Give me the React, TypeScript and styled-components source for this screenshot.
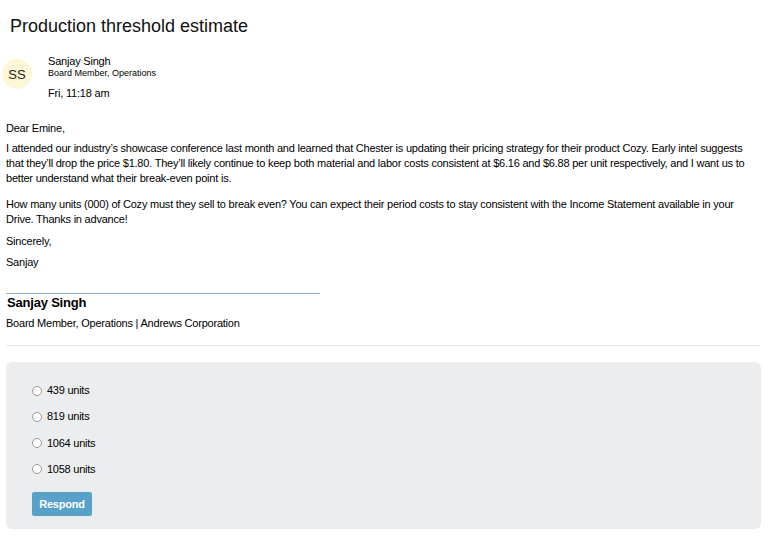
import styled, { createGlobalStyle } from "styled-components";

const GlobalStyle = createGlobalStyle`
  body {
    margin: 0;
    background: #ffffff;
    font-family: "Liberation Sans", Arial, sans-serif;
    color: #000000;
  }
`;

const Page = styled.div`
  padding: 0 10px 0 6px;
`;

const Title = styled.h1`
  margin: 0;
  padding: 14px 0 0 4px;
  font-size: 18px;
  font-weight: 400;
  line-height: 24px;
  color: #111;
`;

const Sender = styled.div`
  display: flex;
  align-items: flex-start;
  gap: 16px;
  margin-top: 17px;
  margin-left: -4px;
`;

const Avatar = styled.div`
  width: 30px;
  height: 30px;
  margin-top: 4px;
  border-radius: 50%;
  background: #fdf7d6;
  display: flex;
  align-items: center;
  justify-content: center;
  font-size: 13px;
  color: #222;
`;

const SenderInfo = styled.div`
  display: flex;
  flex-direction: column;
`;

const SenderName = styled.span`
  font-size: 11px;
  line-height: 13px;
  letter-spacing: -0.2px;
`;

const SenderRole = styled.span`
  font-size: 9px;
  line-height: 11px;
`;

const SentAt = styled.span`
  font-size: 11px;
  line-height: 13px;
  margin-top: 8px;
  letter-spacing: -0.2px;
`;

const Body = styled.div`
  margin-top: 21px;
  font-size: 11px;
  line-height: 15px;
  letter-spacing: -0.22px;
`;

const Para = styled.p<{ $gap?: number }>`
  margin: 0 0 ${(p) => p.$gap ?? 7}px;
`;

const SigRule = styled.div`
  width: 314px;
  height: 1px;
  background: #8db3d6;
  margin-top: 23px;
`;

const SigName = styled.div`
  font-weight: 700;
  font-size: 13px;
  line-height: 16px;
  margin-top: 1px;
  padding-left: 1px;
  letter-spacing: -0.2px;
`;

const SigTitle = styled.div`
  font-size: 11px;
  line-height: 14px;
  margin-top: 5px;
  letter-spacing: -0.22px;
`;

const Divider = styled.hr`
  border: none;
  border-top: 1px solid #e8e8e8;
  margin: 15px 0 0;
  width: 754px;
`;

const Panel = styled.div`
  margin-top: 16px;
  width: 755px;
  box-sizing: border-box;
  background: #ecedef;
  border-radius: 6px;
  padding: 22px 26px 13px;
`;

const Options = styled.div`
  display: flex;
  flex-direction: column;
  gap: 13.3px;
`;

const Option = styled.label`
  display: flex;
  align-items: center;
  gap: 5px;
  font-size: 11px;
  line-height: 13px;
  letter-spacing: -0.25px;
`;

const Radio = styled.input`
  appearance: none;
  width: 10px;
  height: 10px;
  margin: 0;
  border: 1px solid #9a9a9a;
  border-radius: 50%;
  background: #fff;
`;

const Button = styled.button`
  margin-top: 16px;
  width: 60px;
  height: 24px;
  border: none;
  border-radius: 2px;
  background: #58a1c9;
  color: #fff;
  font-family: "Liberation Sans", Arial, sans-serif;
  font-weight: 700;
  font-size: 11px;
  letter-spacing: -0.2px;
  padding: 0;
`;

const options = ["439 units", "819 units", "1064 units", "1058 units"];

export default function App() {
  return (
    <>
      <GlobalStyle />
      <Page>
        <Title>Production threshold estimate</Title>
        <Sender>
          <Avatar>SS</Avatar>
          <SenderInfo>
            <SenderName>Sanjay Singh</SenderName>
            <SenderRole>Board Member, Operations</SenderRole>
            <SentAt>Fri, 11:18 am</SentAt>
          </SenderInfo>
        </Sender>
        <Body>
          <Para $gap={5}>Dear Emine,</Para>
          <Para $gap={11}>
            I attended our industry’s showcase conference last month and learned that Chester is updating their
            pricing strategy for their product Cozy. Early intel suggests that they’ll drop the price $1.80. They’ll
            likely continue to keep both material and labor costs consistent at $6.16 and $6.88 per unit
            respectively, and I want us to better understand what their break-even point is.
          </Para>
          <Para>
            How many units (000) of Cozy must they sell to break even? You can expect their period costs to stay
            consistent with the Income Statement available in your Drive. Thanks in advance!
          </Para>
          <Para $gap={6}>Sincerely,</Para>
          <Para $gap={0}>Sanjay</Para>
        </Body>
        <SigRule />
        <SigName>Sanjay Singh</SigName>
        <SigTitle>Board Member, Operations | Andrews Corporation</SigTitle>
        <Divider />
        <Panel>
          <Options>
            {options.map((o) => (
              <Option key={o}>
                <Radio type="radio" name="answer" />
                {o}
              </Option>
            ))}
          </Options>
          <Button>Respond</Button>
        </Panel>
      </Page>
    </>
  );
}
